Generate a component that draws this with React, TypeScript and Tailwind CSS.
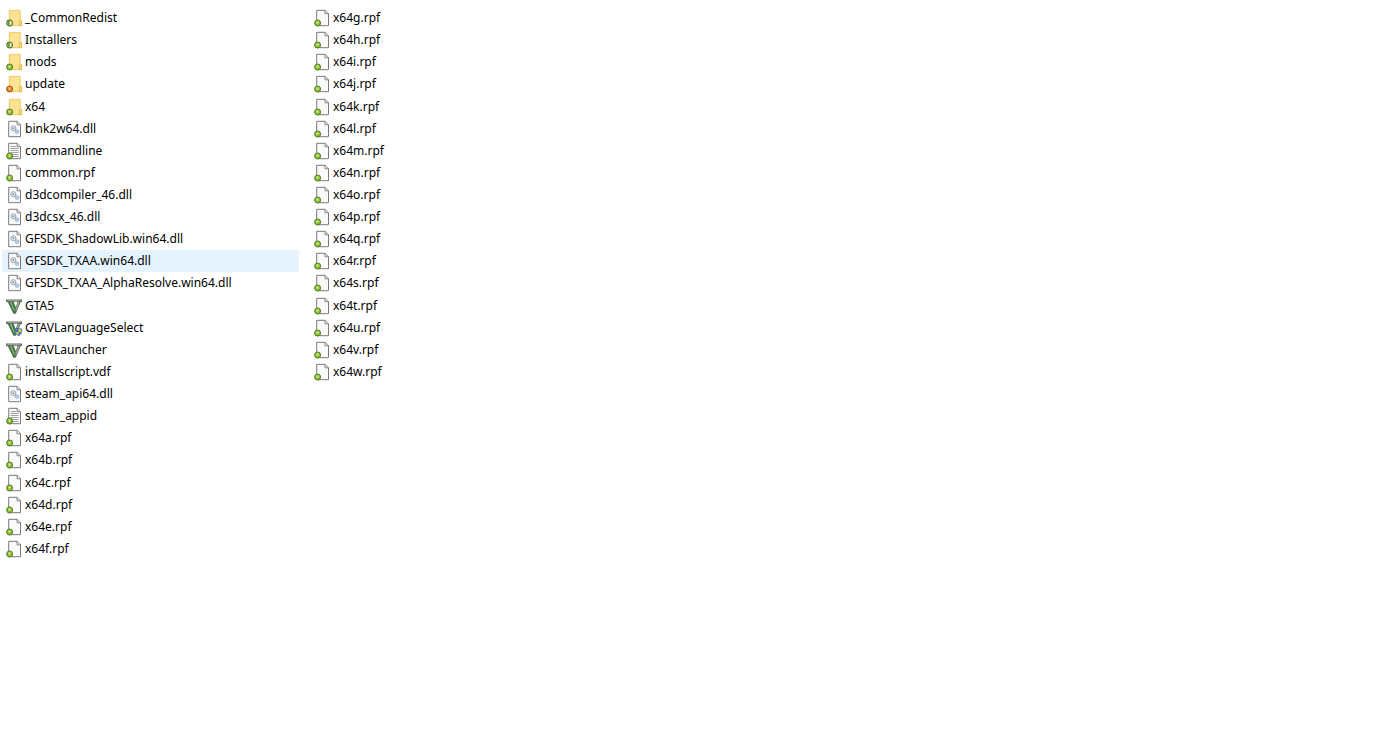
import type { ReactNode } from "react";

type Kind = "folder" | "dll" | "text" | "file" | "game" | "gameAdmin";
type Badge = "green" | "half" | "orange";

type Entry = {
  name: string;
  kind: Kind;
  badge?: Badge;
};

const ENTRIES: Entry[] = [
  { name: "_CommonRedist", kind: "folder", badge: "half" },
  { name: "Installers", kind: "folder", badge: "half" },
  { name: "mods", kind: "folder", badge: "green" },
  { name: "update", kind: "folder", badge: "orange" },
  { name: "x64", kind: "folder", badge: "green" },
  { name: "bink2w64.dll", kind: "dll" },
  { name: "commandline", kind: "text", badge: "green" },
  { name: "common.rpf", kind: "file", badge: "green" },
  { name: "d3dcompiler_46.dll", kind: "dll" },
  { name: "d3dcsx_46.dll", kind: "dll" },
  { name: "GFSDK_ShadowLib.win64.dll", kind: "dll" },
  { name: "GFSDK_TXAA.win64.dll", kind: "dll" },
  { name: "GFSDK_TXAA_AlphaResolve.win64.dll", kind: "dll" },
  { name: "GTA5", kind: "game" },
  { name: "GTAVLanguageSelect", kind: "gameAdmin" },
  { name: "GTAVLauncher", kind: "game" },
  { name: "installscript.vdf", kind: "file", badge: "green" },
  { name: "steam_api64.dll", kind: "dll" },
  { name: "steam_appid", kind: "text", badge: "green" },
  ..."abcdefghijklmnopqrstuvw".split("").map(
    (letter): Entry => ({ name: `x64${letter}.rpf`, kind: "file", badge: "green" })
  ),
];

const HIGHLIGHTED = "GFSDK_TXAA.win64.dll";

function FolderShape() {
  return (
    <>
      <path d="M4.3 1.4h10.9v9.4l1.4.9v5H4.3z" fill="#fde391" stroke="#e9c65c" strokeWidth="0.9" />
      <path d="M14.2 16.6v-4.2l1-1.4 1.4 1v4.6z" fill="#fbdc7e" stroke="#dcb24a" strokeWidth="0.8" />
    </>
  );
}

function PageShape({ children }: { children?: ReactNode }) {
  return (
    <>
      <path d="M3.7 1.3h8.6l3.2 3.3v12.1H3.7z" fill="#fafafa" stroke="#7a7a7a" strokeWidth="1" />
      <path d="M12 1.3v3.5h3.5" fill="#eeeeee" stroke="#7a7a7a" strokeWidth="0.9" />
      {children}
    </>
  );
}

function Gears() {
  return (
    <>
      <circle cx="8.4" cy="8.2" r="2.5" fill="#eef1f5" stroke="#93a0ae" strokeWidth="1" />
      <circle cx="8.4" cy="8.2" r="0.9" fill="#75869a" />
      <circle cx="12" cy="11.6" r="1.8" fill="#dbe9f6" stroke="#8fb2d4" strokeWidth="1" />
      <circle cx="12" cy="11.6" r="0.6" fill="#6d97c0" />
    </>
  );
}

function GameShape({ shield }: { shield?: boolean }) {
  return (
    <>
      <path d="M1 2.6h16v2.2l-1.6.6L10.8 16.8H8.4L3 5.4l-2-.6z" fill="#626b61" />
      <path d="M2.4 3.6h13.2" stroke="#c3c8c1" strokeWidth="0.8" strokeDasharray="2 0.6" />
      <path d="M3.8 5h3.8l2.8 6.6-.8 4.4h-.8z" fill="#2f7a2c" />
      <path d="M4.8 5h1.5l3.2 7.6-.3 2z" fill="#8ec783" />
      <path d="M8.6 4.8h4L10.7 10z" fill="#ffffff" />
      <path d="M13.2 5h1.4l-3.8 9.4-.2-2.6z" fill="#9bb795" />
      {shield && (
        <>
          <path d="M9.8 10l3.7-1.4L17.2 10c.2 3.6-1.1 5.9-3.7 7.3-2.6-1.4-3.9-3.7-3.7-7.3z" fill="#3576bf" />
          <path d="M13.5 9.6l2.8 1v2.6h-2.8z" fill="#f3cb45" />
          <path d="M10.6 13.2h2.9v3c-1.5-.8-2.5-1.8-2.9-3z" fill="#f3cb45" />
        </>
      )}
    </>
  );
}

function BadgeShape({ badge }: { badge: Badge }) {
  if (badge === "half") {
    return (
      <>
        <circle cx="4.6" cy="14" r="2.8" fill="#ffffff" stroke="#557a27" strokeWidth="1.2" />
        <path d="M4.8 11.6a2.4 2.4 0 000 4.8z" fill="#6f9c2c" />
      </>
    );
  }
  const orange = badge === "orange";
  return (
    <>
      <circle
        cx="4.6"
        cy="14"
        r="3"
        fill={orange ? "#e58a30" : "#8cc034"}
        stroke={orange ? "#a3561c" : "#567d26"}
        strokeWidth="1"
      />
      <circle cx="4.5" cy="13.5" r="1.3" fill={orange ? "#f6b878" : "#c4e384"} />
    </>
  );
}

function EntryIcon({ kind, badge }: { kind: Kind; badge?: Badge }) {
  return (
    <svg className="size-[18px] shrink-0" viewBox="0 0 18 18" fill="none" aria-hidden="true">
      {kind === "folder" && <FolderShape />}
      {kind === "file" && <PageShape />}
      {kind === "dll" && (
        <PageShape>
          <Gears />
        </PageShape>
      )}
      {kind === "text" && (
        <PageShape>
          <path d="M5.5 4.5h5.5M5.5 6.5h8M5.5 8.5h8M5.5 10.5h8M5.5 12.5h8M5.5 14.5h8" stroke="#969696" strokeWidth="0.9" />
        </PageShape>
      )}
      {kind === "game" && <GameShape />}
      {kind === "gameAdmin" && <GameShape shield />}
      {badge && <BadgeShape badge={badge} />}
    </svg>
  );
}

export default function App() {
  return (
    <main className="min-h-screen overflow-x-auto bg-white px-0.5 py-[7px] font-['Noto_Sans','Open_Sans',sans-serif] text-xs text-black">
      {/* Entries run down the first column, then wrap to the next */}
      <ul className="grid min-h-[553px] auto-cols-[297px] grid-flow-col grid-rows-[repeat(25,1fr)] gap-x-[11px]">
        {ENTRIES.map((entry) => (
          <li key={entry.name} className="flex">
            <button
              type="button"
              className={`flex w-full items-center gap-0.5 pl-[3px] text-left leading-5 hover:bg-[#e5f3ff] ${
                entry.name === HIGHLIGHTED ? "bg-[#e5f3ff]" : ""
              }`}
            >
              <EntryIcon kind={entry.kind} badge={entry.badge} />
              <span className="whitespace-nowrap">{entry.name}</span>
            </button>
          </li>
        ))}
      </ul>
    </main>
  );
}
